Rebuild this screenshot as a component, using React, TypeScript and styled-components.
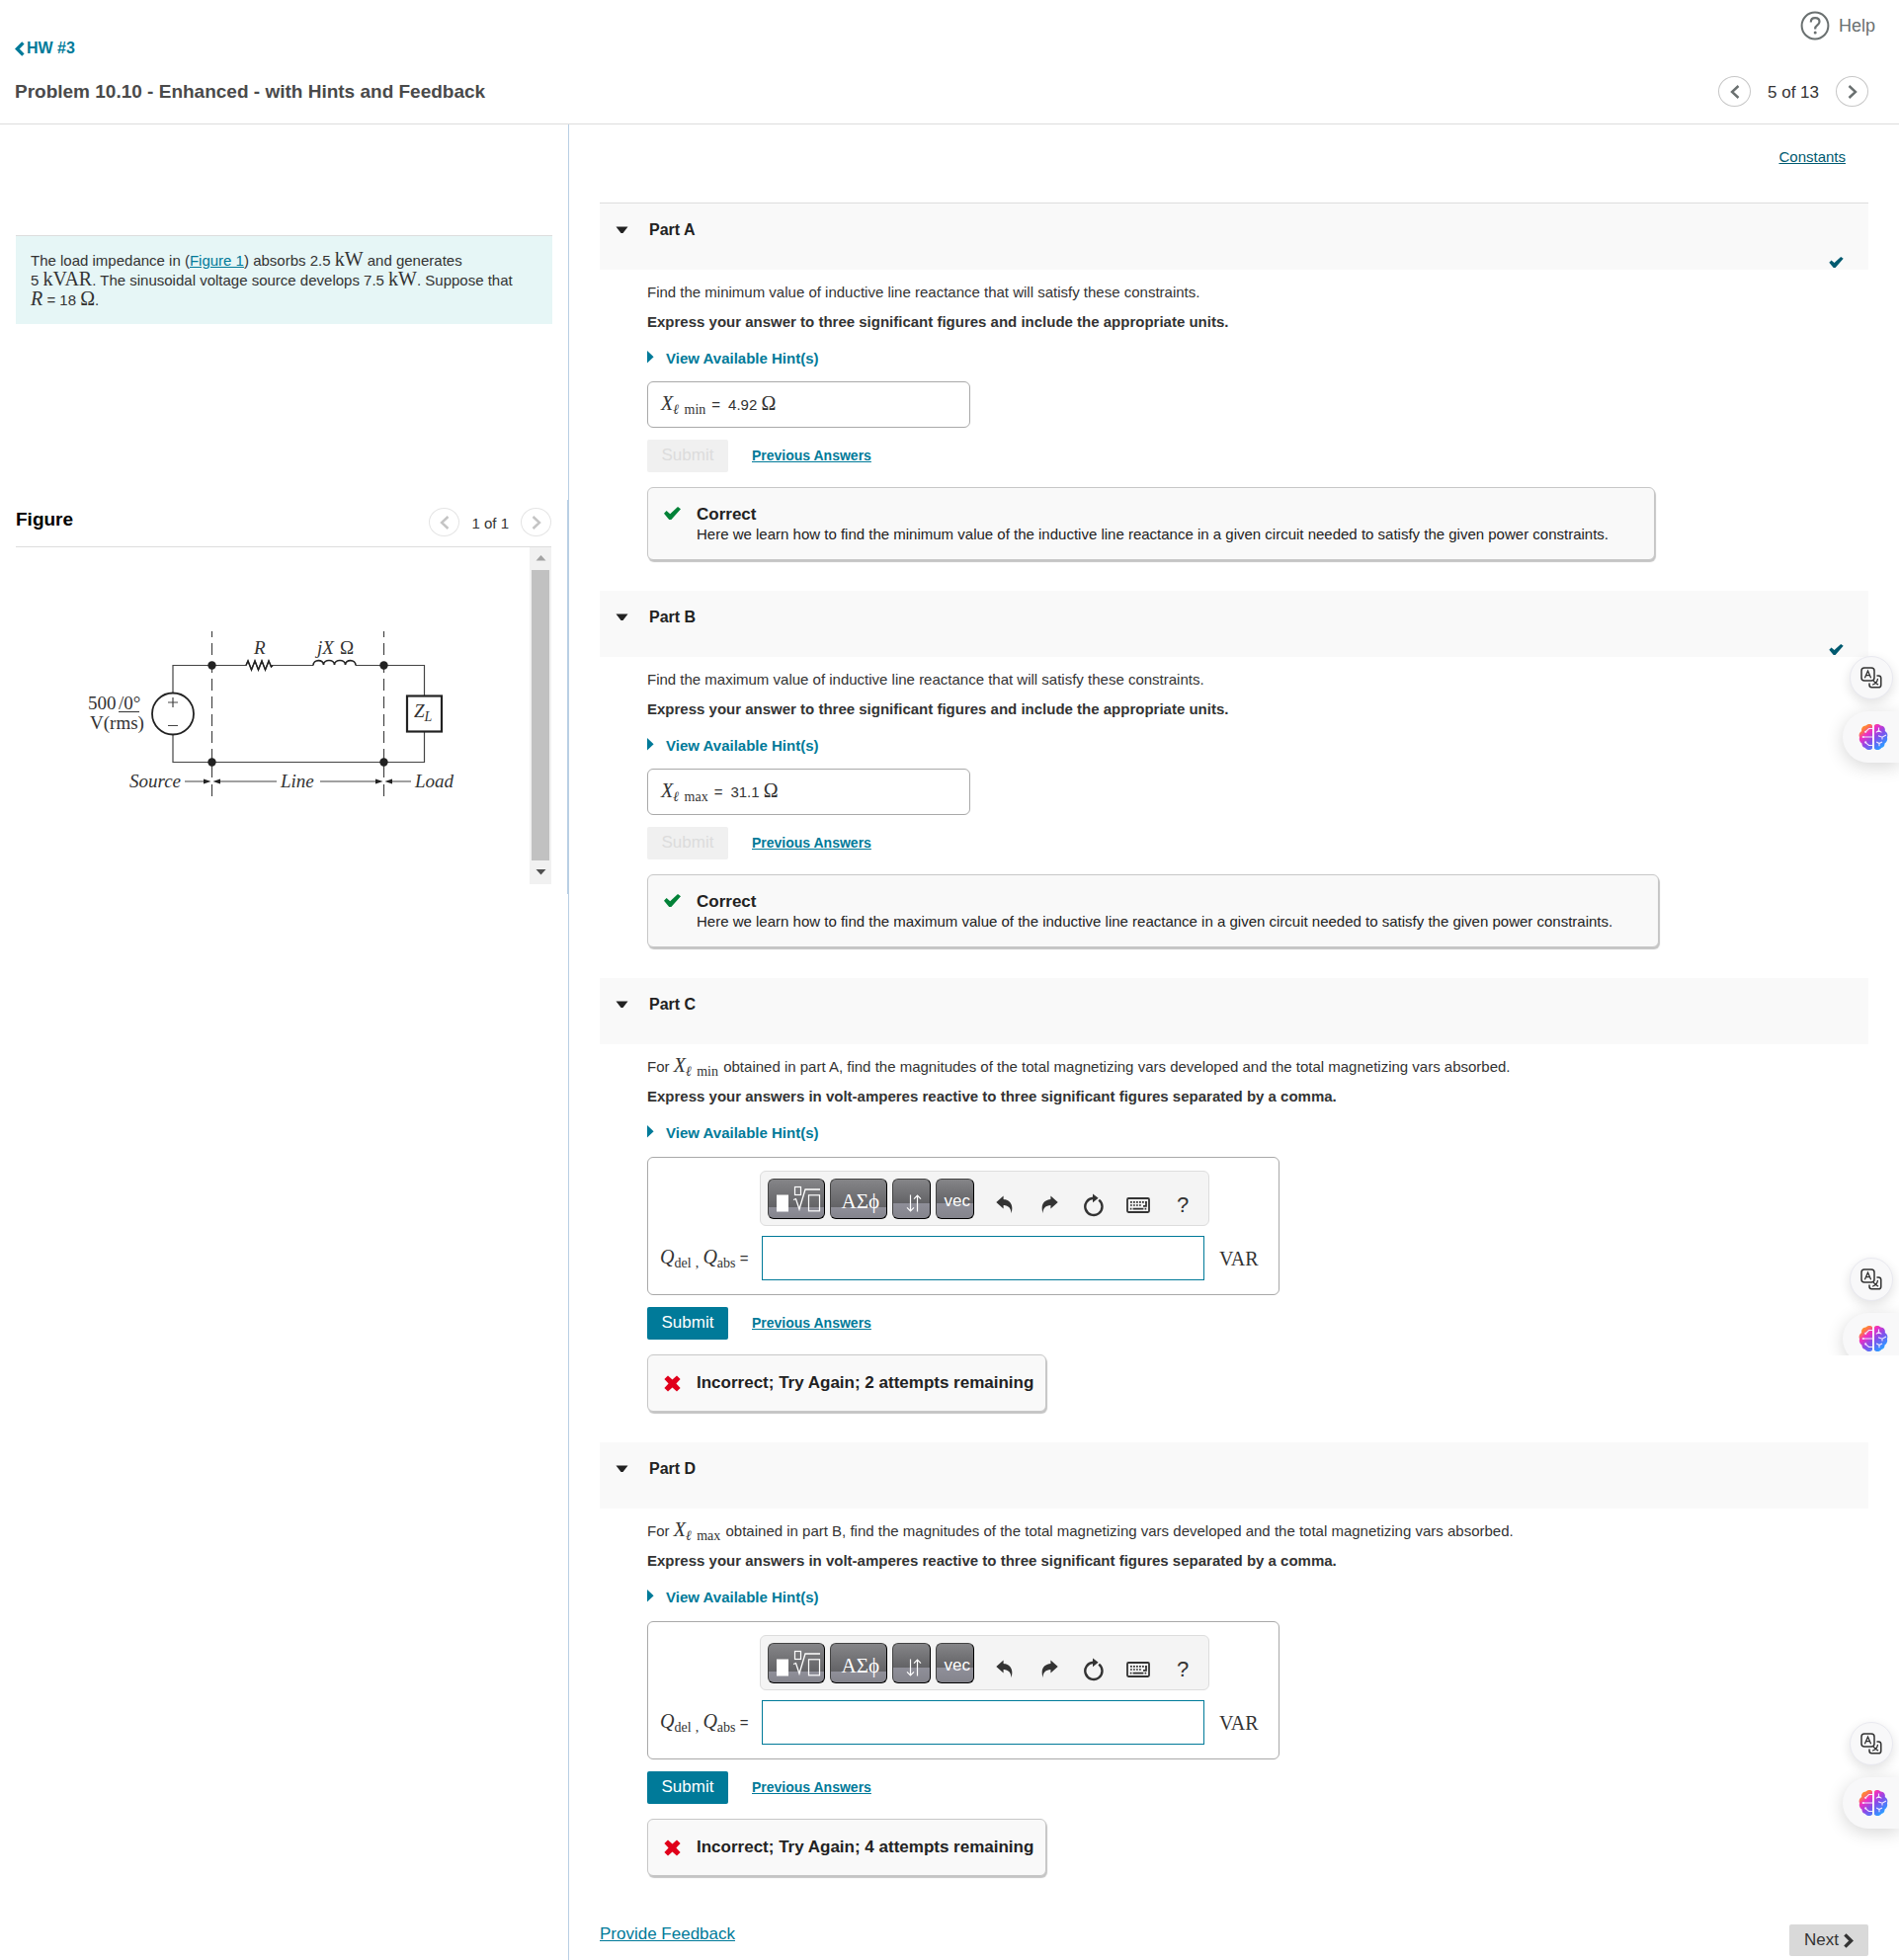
import React, { useId } from "react";
import styled, { createGlobalStyle, css } from "styled-components";

const teal = "#007a99";
const deepTeal = "#005a70";
const sans = '"Liberation Sans", Arial, sans-serif';
const serif = '"Liberation Serif", "Times New Roman", serif';

const GlobalStyle = createGlobalStyle`
  *, *::before, *::after { box-sizing: border-box; }
  body {
    margin: 0;
    background: #fff;
    color: #333;
    font-family: ${sans};
    font-size: 15px;
    line-height: 20px;
  }
  p, h1, h2, h3 { margin: 0; }
  button { font-family: inherit; cursor: pointer; }
  a { color: ${teal}; }
`;

const Page = styled.div`
  position: relative;
  display: flex;
  flex-direction: column;
  min-height: 100vh;
  overflow: hidden;
`;

const Header = styled.header`
  display: flex;
  justify-content: space-between;
  height: 126px;
  border-bottom: 1px solid #ddd;
`;

const HeaderLeft = styled.div`
  padding: 39px 0 0 15px;
`;

const BackLink = styled.a`
  display: flex;
  align-items: center;
  gap: 2px;
  font-size: 16px;
  font-weight: bold;
  text-decoration: none;
`;

const PageTitle = styled.h1`
  margin-top: 22px;
  font-size: 19px;
  line-height: 24px;
  color: #4a4a4a;
`;

const HeaderRight = styled.div`
  display: flex;
  flex-direction: column;
  align-items: flex-end;
  padding-top: 11px;
`;

const HelpLink = styled.a`
  display: flex;
  align-items: center;
  gap: 9px;
  margin-right: 24px;
  font-size: 18px;
  line-height: 28px;
  color: #6a7070;
  text-decoration: none;
`;

const Pager = styled.nav<{ $gap: number; $end: number }>`
  display: flex;
  align-items: center;
  gap: ${(p) => p.$gap}px;
  margin-right: ${(p) => p.$end}px;
`;

const HeaderPager = styled(Pager)`
  margin-top: 36px;
  font-size: 17px;
`;

const PagerText = styled.span`
  padding-top: 3px;
`;

const RoundButton = styled.button<{ $small?: boolean }>`
  display: flex;
  align-items: center;
  justify-content: center;
  width: ${(p) => (p.$small ? 31 : 33)}px;
  height: ${(p) => (p.$small ? 29 : 31)}px;
  padding: 0;
  border: 1px solid ${(p) => (p.$small ? "#e4e4e4" : "#c7c7c7")};
  border-radius: 50%;
  background: #fff;
  color: ${(p) => (p.$small ? "#c4c4c4" : "#6a7070")};
`;

const Columns = styled.div`
  display: flex;
  flex: 1;
`;

const Aside = styled.aside`
  display: flex;
  flex: 0 0 576px;
  flex-direction: column;
  border-right: 1px solid #b9cfe4;
`;

const Intro = styled.p`
  margin: 112px 16px 0;
  padding: 15px 15px 14px;
  border-top: 1px solid #ddd;
  background: #e6f6f6;
`;

const FigurePanel = styled.section`
  margin-top: 178px;
  padding: 0 16px 10px 16px;
  border-right: 1px solid #b9cfe4;
`;

const FigureHead = styled.div`
  display: flex;
  align-items: flex-start;
  justify-content: space-between;
  height: 48px;
  padding-top: 8px;
  border-bottom: 1px solid #ddd;
`;

const FigureTitle = styled.h2`
  padding-top: 2px;
  font-size: 19px;
  color: #000;
`;

const FigureView = styled.div`
  display: flex;
  height: 341px;
  justify-content: space-between;
`;

const ScrollTrack = styled.div`
  display: flex;
  flex-direction: column;
  align-items: center;
  gap: 9px;
  width: 22px;
  padding-top: 8px;
  background: #f1f1f1;
`;

const ScrollThumb = styled.div`
  width: 18px;
  height: 294px;
  background: #c1c1c1;
`;

const Main = styled.main`
  display: flex;
  flex: 1;
  flex-direction: column;
  min-width: 0;
  padding: 23px 31px 4px;
`;

const ConstantsLink = styled.a`
  align-self: flex-end;
  margin-right: 23px;
  color: ${deepTeal};
`;

const Parts = styled.div`
  display: flex;
  flex-direction: column;
  gap: 31px;
  margin-top: 36px;
`;

const Part = styled.section`
  &:first-child > header { border-top: 1px solid #ddd; }
`;

const PartHead = styled.header`
  box-sizing: content-box;
  display: flex;
  justify-content: space-between;
  height: 67px;
  padding: 0 25px 0 16px;
  background: #f9f9f9;
  color: #222;
`;

const PartToggle = styled.button`
  display: flex;
  align-items: center;
  align-self: flex-start;
  gap: 21px;
  margin-top: 17px;
  padding: 0;
  border: 0;
  background: none;
  color: #222;
  font-size: 16px;
  font-weight: bold;
  line-height: 20px;
`;

const PartDone = styled.span`
  align-self: flex-end;
  line-height: 0;
  margin-bottom: 2px;
`;

const PartBody = styled.div`
  display: flex;
  flex-direction: column;
  align-items: flex-start;
  padding: 13px 0 0 48px;
`;

const Instruction = styled.p`
  margin-top: 10px;
  font-weight: bold;
`;

const HintButton = styled.button`
  display: flex;
  align-items: center;
  gap: 12px;
  margin-top: 17px;
  padding: 0;
  border: 0;
  background: none;
  color: ${teal};
  font-size: 15px;
  font-weight: bold;
  line-height: 20px;
`;

const panel = css`
  border: 1px solid #a9a9a9;
  border-radius: 6px;
  background: #fff;
`;

const AnswerBox = styled.div`
  ${panel}
  display: flex;
  align-items: center;
  width: 327px;
  height: 47px;
  margin-top: 13px;
  padding: 0 13px;
`;

const Equals = styled.span`
  margin: 0 8px 0 5px;
`;

const EntryBox = styled.div`
  ${panel}
  width: 640px;
  margin-top: 14px;
  padding: 13px 14px 14px 12px;
`;

const MathBar = styled.div`
  display: flex;
  align-items: center;
  width: 455px;
  height: 56px;
  margin-left: 101px;
  padding: 0 9px 0 7px;
  border: 1px solid #ddd;
  border-radius: 6px;
  background: #f4f4f4;
`;

const Palette = styled.div`
  display: flex;
  gap: 5px;
  margin-right: 14px;
`;

const PaletteButton = styled.button<{ $wide?: boolean; $font?: string; $size?: number; $inset?: number }>`
  display: flex;
  align-items: flex-end;
  justify-content: flex-end;
  width: ${(p) => (p.$wide ? 58 : 39)}px;
  height: 41px;
  padding: 0 ${(p) => p.$inset ?? 3}px 6px 0;
  overflow: hidden;
  border: 1px solid #444;
  border-right-color: #000;
  border-bottom-color: #000;
  border-radius: 6px;
  background: ${(p) =>
    p.$wide
      ? "linear-gradient(#858588, #636366 72%, #8f8f99 73%, #84848c)"
      : "linear-gradient(#858588, #636366 61%, #8f8f99 62%, #84848c)"};
  color: #fff;
  font-family: ${(p) => p.$font ?? "inherit"};
  font-size: ${(p) => p.$size ?? 17}px;
  line-height: 22px;
`;

const Tools = styled.div`
  display: flex;
  flex: 1;
  justify-content: space-between;
  padding-top: 13px;
`;

const ToolButton = styled.button`
  display: flex;
  align-items: center;
  justify-content: center;
  width: 34px;
  height: 28px;
  padding: 0;
  border: 0;
  background: none;
  color: #333;
  font-size: 22px;
`;

const EntryRow = styled.div`
  display: flex;
  align-items: center;
  margin-top: 10px;
`;

const EntryLabel = styled.label`
  width: 103px;
  white-space: nowrap;
`;

const EntryInput = styled.input`
  flex: 1;
  min-width: 0;
  height: 45px;
  border: 1px solid ${teal};
  border-radius: 0;
  background: #fff;
  font-size: 16px;
  outline: none;
`;

const Unit = styled.span`
  margin-left: 15px;
  width: 46px;
  font-family: ${serif};
  font-size: 20px;
`;

const Actions = styled.div`
  display: flex;
  align-items: center;
  gap: 24px;
  margin-top: 12px;
`;

const SubmitButton = styled.button`
  width: 82px;
  height: 33px;
  padding: 0 0 2px;
  border: 0;
  border-radius: 2px;
  background: ${teal};
  color: #fff;
  font-size: 17px;

  &:disabled {
    background: #f0f0f0;
    color: #dcdcdc;
  }
`;

const PreviousLink = styled.a`
  padding-bottom: 2px;
  font-size: 14px;
  font-weight: bold;
`;

const Feedback = styled.div<{ $wide?: boolean }>`
  display: flex;
  align-items: ${(p) => (p.$wide ? "flex-start" : "center")};
  gap: 16px;
  margin-top: 15px;
  padding: ${(p) => (p.$wide ? "17px 46px 15px 16px" : "18px 12px 18px 16px")};
  border: 1px solid #c7c7c7;
  border-radius: 6px;
  background: #f9f9f9;
  box-shadow: 1px 2px 1px #c4c4c4;
  color: #222;

  svg { flex: none; }
`;

const FeedbackIcon = styled.span`
  padding-top: 2px;
  line-height: 0;
`;

const FeedbackTitle = styled.h3`
  font-size: 17px;
  line-height: 20px;
`;

const Footer = styled.footer`
  display: flex;
  align-items: flex-start;
  justify-content: space-between;
  margin-top: 49px;
`;

const FeedbackLink = styled.a`
  font-size: 17px;
`;

const NextButton = styled.button`
  display: flex;
  align-items: center;
  gap: 5px;
  height: 32px;
  padding: 0 15px;
  border: 0;
  border-radius: 2px;
  background: #d9d9d9;
  color: #333;
  font-size: 17px;
`;

const MathText = styled.span<{ $italic?: boolean }>`
  font-family: ${serif};
  font-size: 20px;
  font-style: ${(p) => (p.$italic ? "italic" : "normal")};
  line-height: 16px;
`;

const Sub = styled.sub`
  font-family: ${serif};
  font-size: 14px;
  line-height: 0;
  vertical-align: -4px;
`;

const Bound = styled.span`
  margin: 0 1px 0 2px;
`;

const Dock = styled.div<{ $top: number; $cut?: boolean }>`
  position: absolute;
  top: ${(p) => p.$top}px;
  right: 0;
  width: 97px;
  height: ${(p) => (p.$cut ? 118 : 150)}px;
  padding-top: 19px;
  display: flex;
  flex-direction: column;
  align-items: flex-end;
  gap: 12px;
  overflow: hidden;
  pointer-events: none;
`;

const dockItem = css`
  flex: none;
  display: flex;
  align-items: center;
  padding: 0;
  background: #f8f8f9;
  color: #333;
  pointer-events: auto;
`;

const TranslateButton = styled.button`
  ${dockItem}
  justify-content: center;
  width: 44px;
  height: 44px;
  margin-right: 6px;
  border: 1px solid #e9e9f0;
  border-radius: 50%;
  box-shadow: 0 4px 12px rgba(0, 0, 0, 0.12);
`;

const BrainButton = styled.button`
  ${dockItem}
  width: 57px;
  height: 52px;
  padding-left: 16px;
  border: 0;
  border-radius: 26px 0 0 26px;
  box-shadow: 0 4px 18px rgba(0, 0, 0, 0.16);
`;

const Chevron = ({ right }: { right?: boolean }) => (
  <svg width="10" height="16" viewBox="0 0 10 16" fill="none" stroke="currentColor" strokeWidth="2.4" aria-hidden>
    <path d={right ? "M1.5 2 L8 8 L1.5 14" : "M8.5 2 L2 8 L8.5 14"} />
  </svg>
);

const ThickChevron = ({ right }: { right?: boolean }) => (
  <svg width="10" height="15" viewBox="0 0 10 15" fill="none" stroke="currentColor" strokeWidth="3.4" aria-hidden>
    <path d={right ? "M1.4 1.4 L7.6 7.5 L1.4 13.6" : "M8.4 1.4 L2.4 7.5 L8.4 13.6"} />
  </svg>
);

const HelpIcon = () => (
  <svg width="30" height="30" viewBox="0 0 30 30" fill="none" stroke="currentColor" aria-hidden>
    <circle cx="15" cy="15" r="13.4" strokeWidth="2" />
    <path d="M10.8 11.4 C10.8 8.6 12.6 7.2 15.1 7.2 C17.7 7.2 19.5 8.8 19.5 11 C19.5 14.4 15.2 14.2 15.2 17.8 V18.4" strokeWidth="2.2" />
    <circle cx="15.2" cy="22" r="1.5" fill="currentColor" stroke="none" />
  </svg>
);

const CheckIcon = ({ color, width = 17, height = 13 }: { color: string; width?: number; height?: number }) => (
  <svg width={width} height={height} viewBox="0 0 17 13" aria-hidden>
    <path d="M0 6.8 L2.6 4 L6.2 7.2 L14 0 L17 2.2 L7.4 13 L5.2 13 Z" fill={color} />
  </svg>
);

const CrossIcon = () => (
  <svg width="17" height="17" viewBox="0 0 17 17" aria-hidden>
    <path d="M4 0.6 L8.5 4.6 L13 0.6 L16.6 4 L12.4 8.5 L16.6 13 L13 16.4 L8.5 12.4 L4 16.4 L0.4 13 L4.6 8.5 L0.4 4 Z" fill="#e0001b" />
  </svg>
);

const Caret = () => (
  <svg width="13" height="8" viewBox="0 0 13 8" aria-hidden>
    <path d="M0.5 0.5 H12.5 L7.5 7 H5.5 Z" fill="#222" />
  </svg>
);

const HintArrow = () => (
  <svg width="7" height="16" viewBox="0 0 7 16" aria-hidden>
    <path d="M0 0 L6.6 6.2 L0 12.4 Z" fill={teal} />
  </svg>
);

const ScrollArrow = ({ down }: { down?: boolean }) => (
  <svg width="11" height="6" viewBox="0 0 11 6" aria-hidden>
    <path d={down ? "M0.5 0 H10.5 L5.5 5.5 Z" : "M0.5 5.5 H10.5 L5.5 0 Z"} fill={down ? "#505050" : "#a3a3a3"} />
  </svg>
);

const RootIcon = () => (
  <svg width="46" height="28" viewBox="0 0 46 28" fill="none" stroke="#fff" aria-hidden>
    <rect x="1" y="10.5" width="12" height="17" fill="#fff" stroke="none" />
    <rect x="19.5" y="2.5" width="6" height="8" strokeWidth="1.2" />
    <path d="M18 15.5 L20.5 14.5 L24 25 L30 5 H45" strokeWidth="1.3" />
    <rect x="33.5" y="10.8" width="11" height="16" strokeWidth="1.2" />
  </svg>
);

const UpDownIcon = () => (
  <svg width="16" height="18" viewBox="0 0 16 18" fill="none" stroke="#fff" strokeWidth="1.2" aria-hidden>
    <path d="M4.5 0.5 V17 M1 13.4 L4.5 17 L8 13.4 M11.5 17.5 V1 M8 4.6 L11.5 1 L15 4.6" />
  </svg>
);

const ReplyIcon = ({ flip }: { flip?: boolean }) => (
  <svg width="18" height="19" viewBox="0 0 18 19" aria-hidden>
    <path
      transform={flip ? "translate(18 0) scale(-1 1)" : undefined}
      d="M0.3 6.9 L7.6 0.6 V4 C13.2 4.4 18.6 8.6 15.4 18.2 C15.4 13 12.6 10.2 7.6 10 V13.4 Z"
      fill="currentColor"
    />
  </svg>
);

const ResetIcon = () => (
  <svg width="22" height="24" viewBox="0 0 22 24" fill="none" aria-hidden>
    <path d="M16.2 6.6 A8.6 8.6 0 1 1 10.4 4.8" stroke="currentColor" strokeWidth="2.4" />
    <path d="M10 0.4 L15.6 4.8 L10 9.2 Z" fill="currentColor" />
  </svg>
);

const KeyboardIcon = () => (
  <svg width="24" height="16" viewBox="0 0 24 16" fill="none" stroke="currentColor" aria-hidden>
    <rect x="1" y="1" width="22" height="14" rx="1.2" strokeWidth="1.8" />
    <path d="M4 4.8 H20.4 M4 8 H16" strokeWidth="1.7" strokeDasharray="1.8 1.2" />
    <path d="M20 4 V8.8 H17 M6.6 11.6 H17.4 M3.8 11.6 H5.4 M18.6 11.6 H20.2" strokeWidth="1.7" />
  </svg>
);

const TranslateIcon = () => (
  <svg width="22" height="22" viewBox="0 0 22 22" fill="none" stroke="currentColor" strokeWidth="1.5" strokeLinecap="round" aria-hidden>
    <rect x="1" y="1" width="13" height="13" rx="3" />
    <path d="M4.6 10.8 L7.5 4.2 L10.4 10.8 M5.6 8.6 H9.4" strokeWidth="1.3" />
    <path d="M17 9 H18.2 A2.6 2.6 0 0 1 20.8 11.6 V18.2 A2.6 2.6 0 0 1 18.2 20.8 H11.4 A2.6 2.6 0 0 1 9 18.2 V17" />
    <path d="M12.6 18 C15 17 17 15 17.4 12.4 M13.4 14.4 C14.6 16 16 17 17.6 17.8" strokeWidth="1.3" />
  </svg>
);

const BrainIcon = () => {
  const id = useId();
  return (
    <svg width="30" height="28" viewBox="0 0 30 28" aria-hidden>
      <defs>
        <linearGradient id={id} x1="0.1" y1="0.05" x2="0.9" y2="0.95">
          <stop offset="0" stopColor="#ff9a1f" />
          <stop offset="0.14" stopColor="#ff7a45" />
          <stop offset="0.3" stopColor="#f02fc2" />
          <stop offset="0.55" stopColor="#8a4be8" />
          <stop offset="0.85" stopColor="#3a8cff" />
          <stop offset="1" stopColor="#25b0ff" />
        </linearGradient>
      </defs>
      <path
        d="M14 2.4 C13 0.6 9 0.4 7.4 2.6 C4.4 2.8 2.6 5.4 3.2 8 C0.8 9.4 0 12 1 14.2 C0.2 17 1.6 19.4 3.4 20.4 C3.4 23 5 24.6 6.8 25 C8.6 27.6 12.4 27.6 14 25.4 Z M16 2.4 C17 0.6 21 0.4 22.6 2.6 C25.6 2.8 27.4 5.4 26.8 8 C29.2 9.4 30 12 29 14.2 C29.8 17 28.4 19.4 26.6 20.4 C26.6 23 25 24.6 23.2 25 C21.4 27.6 17.6 27.6 16 25.4 Z"
        fill={`url(#${id})`}
      />
      <g fill="none" stroke="#f3e6ff" strokeWidth="1.1">
        <path d="M14 5.5 H10.5 L7.6 8.4 M14 14 H5 M14 22.5 H10.5 L7.4 19.8" />
        <path d="M20.5 4.5 V7.4 L17.8 9.4 M20.5 7.4 L23.4 9.4 M20 12.8 L24 14.2 L28 12 M24 14.2 V16.4 M18.2 19 L21 20.6 L24 19 M21 20.6 V23.2" />
      </g>
      <g fill="#f3e6ff">
        <circle cx="7.2" cy="8.8" r="1.1" />
        <circle cx="4.8" cy="14" r="1.1" />
        <circle cx="7.2" cy="19.4" r="1.1" />
      </g>
    </svg>
  );
};

const CircuitDrawing = () => (
  <svg width="520" height="341" viewBox="16 554 520 341" fill="none" stroke="#444" strokeWidth="1.2" role="img" aria-label="Source, line and load circuit">
    <path d="M175 701 V673.5 H249 L251 669 L254.5 678 L258 669 L261.5 678 L265 669 L268.5 678 L272 669 L274.5 675 L276 673.5 H317 M360 673.5 H429.5 V704 M429.5 741 V771.5 H175 V743" />
    <path d="M249 673.5 L251 669 L254.5 678 L258 669 L261.5 678 L265 669 L268.5 678 L272 669 L274.5 675 L276 673.5" stroke="#222" strokeWidth="1.5" />
    <path d="M317 673.5 C317 667 327.5 667 327.5 673 C327.5 667 338.5 667 338.5 673 C338.5 667 349.5 667 349.5 673 C349.5 667 360 667 360 673.5" stroke="#222" strokeWidth="1.7" />
    <path d="M214.5 639 V645 M214.5 651 V663 M214.5 670 V681 M214.5 687 V699 M214.5 705 V717 M214.5 723 V735 M214.5 740 V752 M214.5 758 V787 M214.5 794 V806" />
    <path d="M388.5 639 V645 M388.5 651 V663 M388.5 670 V681 M388.5 687 V699 M388.5 705 V717 M388.5 723 V735 M388.5 740 V752 M388.5 758 V787 M388.5 794 V806" />
    <circle cx="175" cy="722.5" r="21" stroke="#222" strokeWidth="1.8" />
    <path d="M170 711 H180 M175 706 V716 M170 734.5 H180" />
    <rect x="412" y="704.5" width="35" height="36" stroke="#222" strokeWidth="2.2" />
    <path d="M187 791 H208 M222 791 H280 M324 791 H381 M396 791 H416" />
    <g fill="#222" stroke="none">
      <circle cx="214.5" cy="673.5" r="4.2" />
      <circle cx="388.5" cy="673.5" r="4.2" />
      <circle cx="214.5" cy="771.5" r="4.2" />
      <circle cx="388.5" cy="771.5" r="4.2" />
      <path d="M206 788.5 L213.5 791 L206 793.5 Z M223 788.5 L215.5 791 L223 793.5 Z M380 788.5 L387.5 791 L380 793.5 Z M397 788.5 L389.5 791 L397 793.5 Z" />
    </g>
    <path d="M120 720.5 H141" />
    <g fill="#333" stroke="none" fontFamily="Liberation Serif, serif" fontSize="19">
      <text x="89" y="718">500</text>
      <text x="120" y="718">/0°</text>
      <text x="91" y="738">V(rms)</text>
      <g fontStyle="italic">
        <text x="257" y="662">R</text>
        <text x="321" y="662">jX</text>
        <text x="419" y="726">Z<tspan fontSize="14" dy="4">L</tspan></text>
        <text x="131" y="797">Source</text>
        <text x="284" y="797">Line</text>
        <text x="420" y="797">Load</text>
      </g>
      <text x="344" y="662">Ω</text>
    </g>
  </svg>
);

const LineReactance = ({ bound }: { bound: "min" | "max" }) => (
  <>
    <MathText $italic>X</MathText>
    <Sub><i>ℓ</i> <Bound>{bound}</Bound></Sub>
  </>
);

type PartFrameProps = {
  name: string;
  done?: boolean;
  question: React.ReactNode;
  instruction: string;
  children: React.ReactNode;
};

const PartFrame = ({ name, done, question, instruction, children }: PartFrameProps) => (
  <Part>
    <PartHead>
      <PartToggle type="button" aria-expanded="true"><Caret />{name}</PartToggle>
      {done && <PartDone><CheckIcon color={deepTeal} width={15} height={11} /></PartDone>}
    </PartHead>
    <PartBody>
      <p>{question}</p>
      <Instruction>{instruction}</Instruction>
      <HintButton type="button"><HintArrow />View Available Hint(s)</HintButton>
      {children}
    </PartBody>
  </Part>
);

const SolvedAnswer = ({ bound, value, word }: { bound: "min" | "max"; value: string; word: string }) => (
  <>
    <AnswerBox>
      <span><LineReactance bound={bound} /><Equals>=</Equals>{value} <MathText>Ω</MathText></span>
    </AnswerBox>
    <Actions>
      <SubmitButton type="button" disabled>Submit</SubmitButton>
      <PreviousLink href="#">Previous Answers</PreviousLink>
    </Actions>
    <Feedback $wide>
      <FeedbackIcon><CheckIcon color="#038238" /></FeedbackIcon>
      <div>
        <FeedbackTitle>Correct</FeedbackTitle>
        <p>Here we learn how to find the {word} value of the inductive line reactance in a given circuit needed to satisfy the given power constraints.</p>
      </div>
    </Feedback>
  </>
);

const OpenAnswer = ({ attempts }: { attempts: number }) => {
  const id = useId();
  return (
    <>
      <EntryBox>
        <MathBar>
          <Palette>
            <PaletteButton type="button" $wide aria-label="Templates"><RootIcon /></PaletteButton>
            <PaletteButton type="button" $wide $font={serif} $size={21} $inset={7}>ΑΣϕ</PaletteButton>
            <PaletteButton type="button" $inset={8} aria-label="Arrows"><UpDownIcon /></PaletteButton>
            <PaletteButton type="button">vec</PaletteButton>
          </Palette>
          <Tools>
            <ToolButton type="button" aria-label="Undo"><ReplyIcon /></ToolButton>
            <ToolButton type="button" aria-label="Redo"><ReplyIcon flip /></ToolButton>
            <ToolButton type="button" aria-label="Reset"><ResetIcon /></ToolButton>
            <ToolButton type="button" aria-label="Keyboard shortcuts"><KeyboardIcon /></ToolButton>
            <ToolButton type="button">?</ToolButton>
          </Tools>
        </MathBar>
        <EntryRow>
          <EntryLabel htmlFor={id}>
            <MathText $italic>Q</MathText><Sub>del</Sub> <Sub>,</Sub> <MathText $italic>Q</MathText><Sub>abs</Sub> =
          </EntryLabel>
          <EntryInput id={id} type="text" />
          <Unit>VAR</Unit>
        </EntryRow>
      </EntryBox>
      <Actions>
        <SubmitButton type="button">Submit</SubmitButton>
        <PreviousLink href="#">Previous Answers</PreviousLink>
      </Actions>
      <Feedback>
        <CrossIcon />
        <FeedbackTitle>Incorrect; Try Again; {attempts} attempts remaining</FeedbackTitle>
      </Feedback>
    </>
  );
};

const AssistDock = ({ top, cut }: { top: number; cut?: boolean }) => (
  <Dock $top={top} $cut={cut}>
    <TranslateButton type="button" aria-label="Translate"><TranslateIcon /></TranslateButton>
    <BrainButton type="button" aria-label="Assistant"><BrainIcon /></BrainButton>
  </Dock>
);

export default function App() {
  return (
    <>
      <GlobalStyle />
      <Page>
        <Header>
          <HeaderLeft>
            <BackLink href="#"><ThickChevron />HW #3</BackLink>
            <PageTitle>Problem 10.10 - Enhanced - with Hints and Feedback</PageTitle>
          </HeaderLeft>
          <HeaderRight>
            <HelpLink href="#"><HelpIcon />Help</HelpLink>
            <HeaderPager $gap={17} $end={31} aria-label="Problems">
              <RoundButton type="button" aria-label="Previous problem"><Chevron /></RoundButton>
              <PagerText>5 of 13</PagerText>
              <RoundButton type="button" aria-label="Next problem"><Chevron right /></RoundButton>
            </HeaderPager>
          </HeaderRight>
        </Header>
        <Columns>
          <Aside>
            <Intro>
              The load impedance in (<a href="#">Figure 1</a>) absorbs 2.5 <MathText>kW</MathText> and generates
              <br />
              5 <MathText>kVAR</MathText>. The sinusoidal voltage source develops 7.5 <MathText>kW</MathText>. Suppose that
              <br />
              <MathText $italic>R</MathText> = 18 <MathText>Ω</MathText>.
            </Intro>
            <FigurePanel>
              <FigureHead>
                <FigureTitle>Figure</FigureTitle>
                <Pager $gap={12} $end={0} aria-label="Figures">
                  <RoundButton type="button" $small disabled aria-label="Previous figure"><Chevron /></RoundButton>
                  <PagerText>1 of 1</PagerText>
                  <RoundButton type="button" $small disabled aria-label="Next figure"><Chevron right /></RoundButton>
                </Pager>
              </FigureHead>
              <FigureView>
                <CircuitDrawing />
                <ScrollTrack>
                  <ScrollArrow />
                  <ScrollThumb />
                  <ScrollArrow down />
                </ScrollTrack>
              </FigureView>
            </FigurePanel>
          </Aside>
          <Main>
            <ConstantsLink href="#">Constants</ConstantsLink>
            <Parts>
              <PartFrame
                name="Part A"
                done
                question="Find the minimum value of inductive line reactance that will satisfy these constraints."
                instruction="Express your answer to three significant figures and include the appropriate units."
              >
                <SolvedAnswer bound="min" value="4.92" word="minimum" />
              </PartFrame>
              <PartFrame
                name="Part B"
                done
                question="Find the maximum value of inductive line reactance that will satisfy these constraints."
                instruction="Express your answer to three significant figures and include the appropriate units."
              >
                <SolvedAnswer bound="max" value="31.1" word="maximum" />
              </PartFrame>
              <PartFrame
                name="Part C"
                question={<>For <LineReactance bound="min" /> obtained in part A, find the magnitudes of the total magnetizing vars developed and the total magnetizing vars absorbed.</>}
                instruction="Express your answers in volt-amperes reactive to three significant figures separated by a comma."
              >
                <OpenAnswer attempts={2} />
              </PartFrame>
              <PartFrame
                name="Part D"
                question={<>For <LineReactance bound="max" /> obtained in part B, find the magnitudes of the total magnetizing vars developed and the total magnetizing vars absorbed.</>}
                instruction="Express your answers in volt-amperes reactive to three significant figures separated by a comma."
              >
                <OpenAnswer attempts={4} />
              </PartFrame>
            </Parts>
            <Footer>
              <FeedbackLink href="#">Provide Feedback</FeedbackLink>
              <NextButton type="button">Next <ThickChevron right /></NextButton>
            </Footer>
          </Main>
        </Columns>
        <AssistDock top={645} />
        <AssistDock top={1254} cut />
        <AssistDock top={1724} />
      </Page>
    </>
  );
}
